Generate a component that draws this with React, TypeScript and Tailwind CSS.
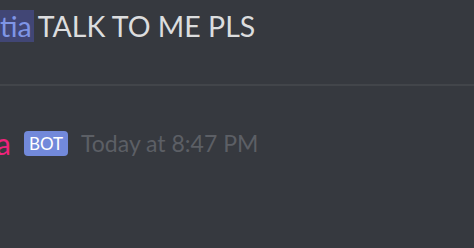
export default function App() {
  return (
    <div className="h-[248px] w-[474px] overflow-hidden bg-[#36393f]" style={{ fontFamily: "Lato, 'Open Sans', sans-serif" }}>
      <div className="flex h-[84px] items-start pt-[10px]">
        <div className="flex items-baseline whitespace-nowrap text-[28.5px] leading-[32px] text-[#dcddde]">
          <span className="bg-[#414675] pr-[2px] text-[#7f95e6]">tia</span>
          <span className="ml-[4px]">TALK TO ME PLS</span>
        </div>
      </div>
      <div className="h-[2px] bg-[#42454a]" />
      <div className="flex items-center pt-[40px] whitespace-nowrap">
        <span className="-ml-[4px] text-[30px] leading-[34px] text-[#f0237c]">a</span>
        <span className="ml-[13px] rounded-[4px] bg-[#7289da] px-[5px] text-[17px] leading-[25px] text-white">BOT</span>
        <span className="ml-[13px] text-[23px] leading-[26px] text-[#5c5f65]">Today at 8:47 PM</span>
      </div>
    </div>
  );
}
